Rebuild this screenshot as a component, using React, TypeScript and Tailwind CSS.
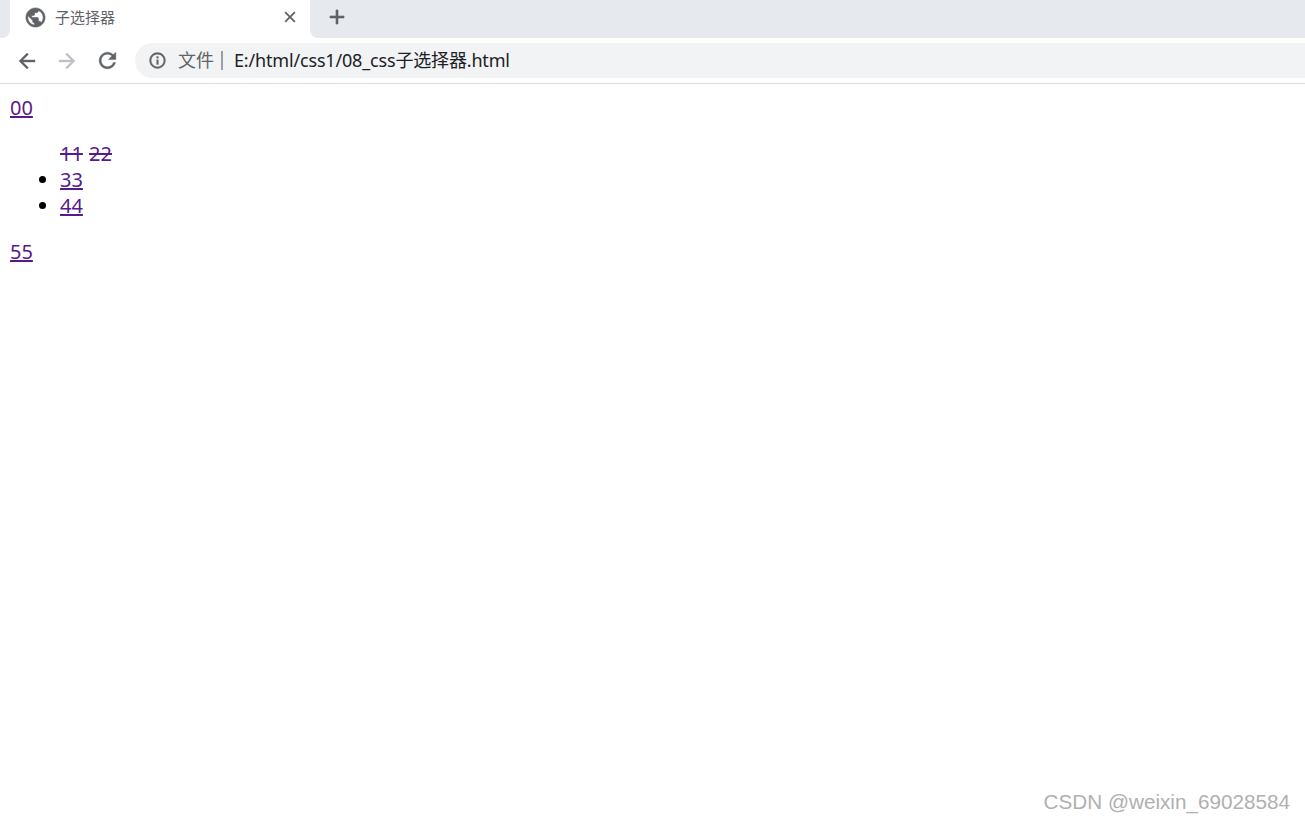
import React from 'react';

const LINK = 'text-[#551a8b] underline';
const ZH = { fontFamily: '"Noto Sans", "Noto Sans CJK SC", sans-serif' };

const ICONS = {
    back: 'M20 11H7.83l5.59-5.59L12 4l-8 8 8 8 1.41-1.41L7.83 13H20v-2z',
    forward: 'M12 4l-1.41 1.41L16.17 11H4v2h12.17l-5.58 5.59L12 20l8-8z',
    refresh: 'M17.65 6.35C16.2 4.9 14.21 4 12 4c-4.42 0-7.99 3.58-7.99 8s3.57 8 7.99 8c3.73 0 6.84-2.55 7.73-6h-2.08c-.82 2.33-3.04 4-5.65 4-3.31 0-6-2.69-6-6s2.69-6 6-6c1.66 0 3.14.69 4.22 1.78L13 11h7V4l-2.35 2.35z',
    close: 'M19 6.41L17.59 5 12 10.59 6.41 5 5 6.41 10.59 12 5 17.59 6.41 19 12 13.41 17.59 19 19 17.59 13.41 12z',
    add: 'M19 13h-6v6h-2v-6H5v-2h6V5h2v6h6v2z',
    info: 'M11 7h2v2h-2zm0 4h2v6h-2zm1-9C6.48 2 2 6.48 2 12s4.48 10 10 10 10-4.48 10-10S17.52 2 12 2zm0 18c-4.41 0-8-3.59-8-8s3.59-8 8-8 8 3.59 8 8-3.59 8-8 8z',
    globe: 'M12 2C6.48 2 2 6.48 2 12s4.48 10 10 10 10-4.48 10-10S17.52 2 12 2zm-1 17.93c-3.95-.49-7-3.85-7-7.93 0-.62.08-1.21.21-1.79L9 15v1c0 1.1.9 2 2 2v1.93zm6.9-2.54c-.26-.81-1-1.39-1.9-1.39h-1v-3c0-.55-.45-1-1-1H8v-2h2c.55 0 1-.45 1-1V7h2c1.1 0 2-.9 2-2v-.41c2.93 1.19 5 4.06 5 7.41 0 2.08-.8 3.97-2.1 5.39z',
};

const Icon: React.FC<{ d: string; size: number; weight: number; className: string }> = ({ d, size, weight, className }) => (
    <svg width={size} height={size} viewBox="0 0 24 24" fill="currentColor" stroke="currentColor" strokeWidth={weight} className={className}>
        <path d={d} />
    </svg>
);

const TabStrip: React.FC = () => (
    <div className="flex h-[38px] bg-white">
        <div className="w-[10px] bg-[#e6e9ed] rounded-br-[8px]" />
        <div className="w-[300px] flex items-center rounded-t-[6px] bg-white pl-[14px] pr-[11px] pb-[4px]">
            <Icon d={ICONS.globe} size={23} weight={0.6} className="text-[#5f6368] shrink-0" />
            <span className="ml-[8px] flex-1 text-[15px] leading-[20px] text-[#5f6368]">子选择器</span>
            <Icon d={ICONS.close} size={18} weight={0.6} className="text-[#5f6368] shrink-0" />
        </div>
        <div className="flex-1 flex items-center bg-[#e6e9ed] rounded-bl-[8px] pl-[15px] pb-[4px]">
            <Icon d={ICONS.add} size={24} weight={0.6} className="text-[#5f6368]" />
        </div>
    </div>
);

const Toolbar: React.FC = () => (
    <div className="flex items-center h-[46px] bg-white border-b border-[#dadce0] pl-[15px]">
        <Icon d={ICONS.back} size={24} weight={0.4} className="text-[#5f6368] shrink-0" />
        <Icon d={ICONS.forward} size={24} weight={0.4} className="ml-[16px] text-[#bdc1c6] shrink-0" />
        <Icon d={ICONS.refresh} size={25} weight={0.4} className="ml-[16px] text-[#5f6368] shrink-0" />
        <div className="ml-[15px] flex-1 h-[35px] flex items-center rounded-l-full bg-[#f1f3f4] pl-[13px]">
            <Icon d={ICONS.info} size={19} weight={0.5} className="text-[#5f6368] shrink-0" />
            <span className="ml-[11px] text-[18px] text-[#5f6368]">文件</span>
            <span className="ml-[7px] w-[2px] h-[19px] bg-[#9aa0a6]" />
            <span className="ml-[11px] text-[18px] tracking-[-0.17px] text-[#202124]">E:/html/css1/08_css子选择器.html</span>
        </div>
    </div>
);

const App: React.FC = () => (
    <div className="relative h-[821px] overflow-hidden bg-white" style={ZH}>
        <TabStrip />
        <Toolbar />
        <div className="px-[10px] text-[20px] leading-[26px] text-black">
            <p className="mt-[11px]"><a className={LINK}>00</a></p>
            <ul className="mt-[20px] pl-[50px] list-disc">
                <li className="list-none">
                    <a className="text-[#551a8b] line-through">11</a> <a className="ml-[1px] text-[#551a8b] line-through">22</a>
                </li>
                <li><a className={LINK}>33</a></li>
                <li><a className={LINK}>44</a></li>
            </ul>
            <p className="mt-[20px]"><a className={LINK}>55</a></p>
        </div>
        <div className="absolute right-[15px] bottom-[4px] font-['Liberation_Sans',sans-serif] text-[20.7px] text-[#b0b0b0]">
            CSDN @weixin_69028584
        </div>
    </div>
);

export default App;
